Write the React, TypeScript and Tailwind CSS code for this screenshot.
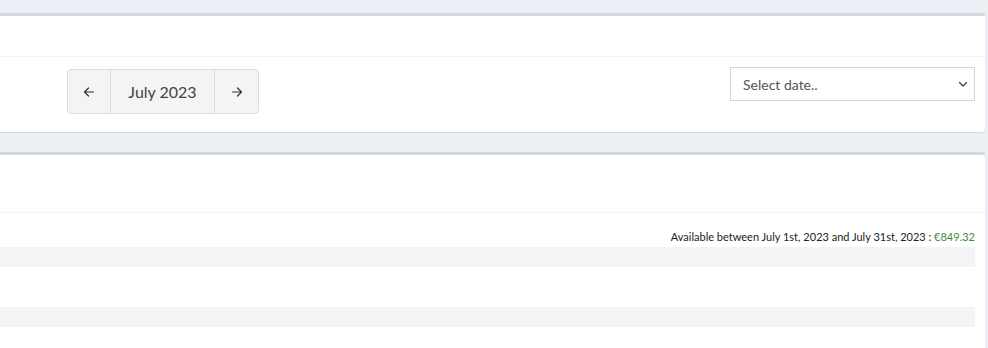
import React from "react";

function ArrowL() {
  return (
    <svg width="12" height="12" viewBox="0 0 12 12" fill="none" stroke="#333" strokeWidth="1.2" strokeLinecap="round" strokeLinejoin="round">
      <path d="M10.5 6H1.5M5.5 2L1.5 6l4 4" />
    </svg>
  );
}
function ArrowR() {
  return (
    <svg width="12" height="12" viewBox="0 0 12 12" fill="none" stroke="#333" strokeWidth="1.2" strokeLinecap="round" strokeLinejoin="round">
      <path d="M1.5 6h9M6.5 2l4 4-4 4" />
    </svg>
  );
}

export default function App() {
  return (
    <div className="min-h-[348px] w-[988px] bg-[#ecf0f5] pt-[13px] overflow-hidden font-['Lato',sans-serif]">
      <div className="ml-[-20px] mr-[3px] flex flex-col gap-[20px]">
        {/* card 1 */}
        <div className="bg-white rounded-[3px] border-t-[3px] border-[#d2d6de] shadow-[0_1px_1px_rgba(0,0,0,0.1)]">
          <div className="h-[41px] border-b border-[#f4f4f4]" />
          <div className="h-[75px] pl-[87px] pr-[10px] pt-[10px] flex items-start justify-between">
            <div className="mt-[2px] flex h-[45px] rounded-[4px] border border-[#ddd] bg-[#f4f4f4] text-[#444]">
              <div className="w-[43px] flex items-center justify-center border-r border-[#ddd]"><ArrowL /></div>
              <div className="w-[104px] flex items-center justify-center border-r border-[#ddd] text-[16px]">July 2023</div>
              <div className="w-[43px] flex items-center justify-center"><ArrowR /></div>
            </div>
            <div className="w-[245px] h-[34px] border border-[#d2d6de] bg-white flex items-center justify-between pl-[12px] pr-[4px] text-[14px] text-[#555]">
              <span>Select date..</span>
              <svg width="14" height="14" viewBox="0 0 14 14" fill="none" stroke="#444" strokeWidth="1.3" strokeLinecap="round" strokeLinejoin="round">
                <path d="M3.5 5.5L7 9l3.5-3.5" />
              </svg>
            </div>
          </div>
        </div>
        {/* card 2 */}
        <div className="bg-white rounded-t-[3px] border-t-[3px] border-[#d2d6de] shadow-[0_1px_1px_rgba(0,0,0,0.1)] h-[200px]">
          <div className="h-[58px] border-b border-[#f4f4f4]" />
          <div className="pr-[10px] pt-[16px]">
            <div className="text-right text-[11px] leading-[16px] text-[#222]">
              Available between July 1st, 2023 and July 31st, 2023 : <span className="text-[#3c8b3c]">€849.32</span>
            </div>
            <div className="mt-[2px] h-[20px] bg-[#f4f4f4]" />
            <div className="h-[40px]" />
            <div className="h-[20px] bg-[#f4f4f4]" />
          </div>
        </div>
      </div>
    </div>
  );
}
